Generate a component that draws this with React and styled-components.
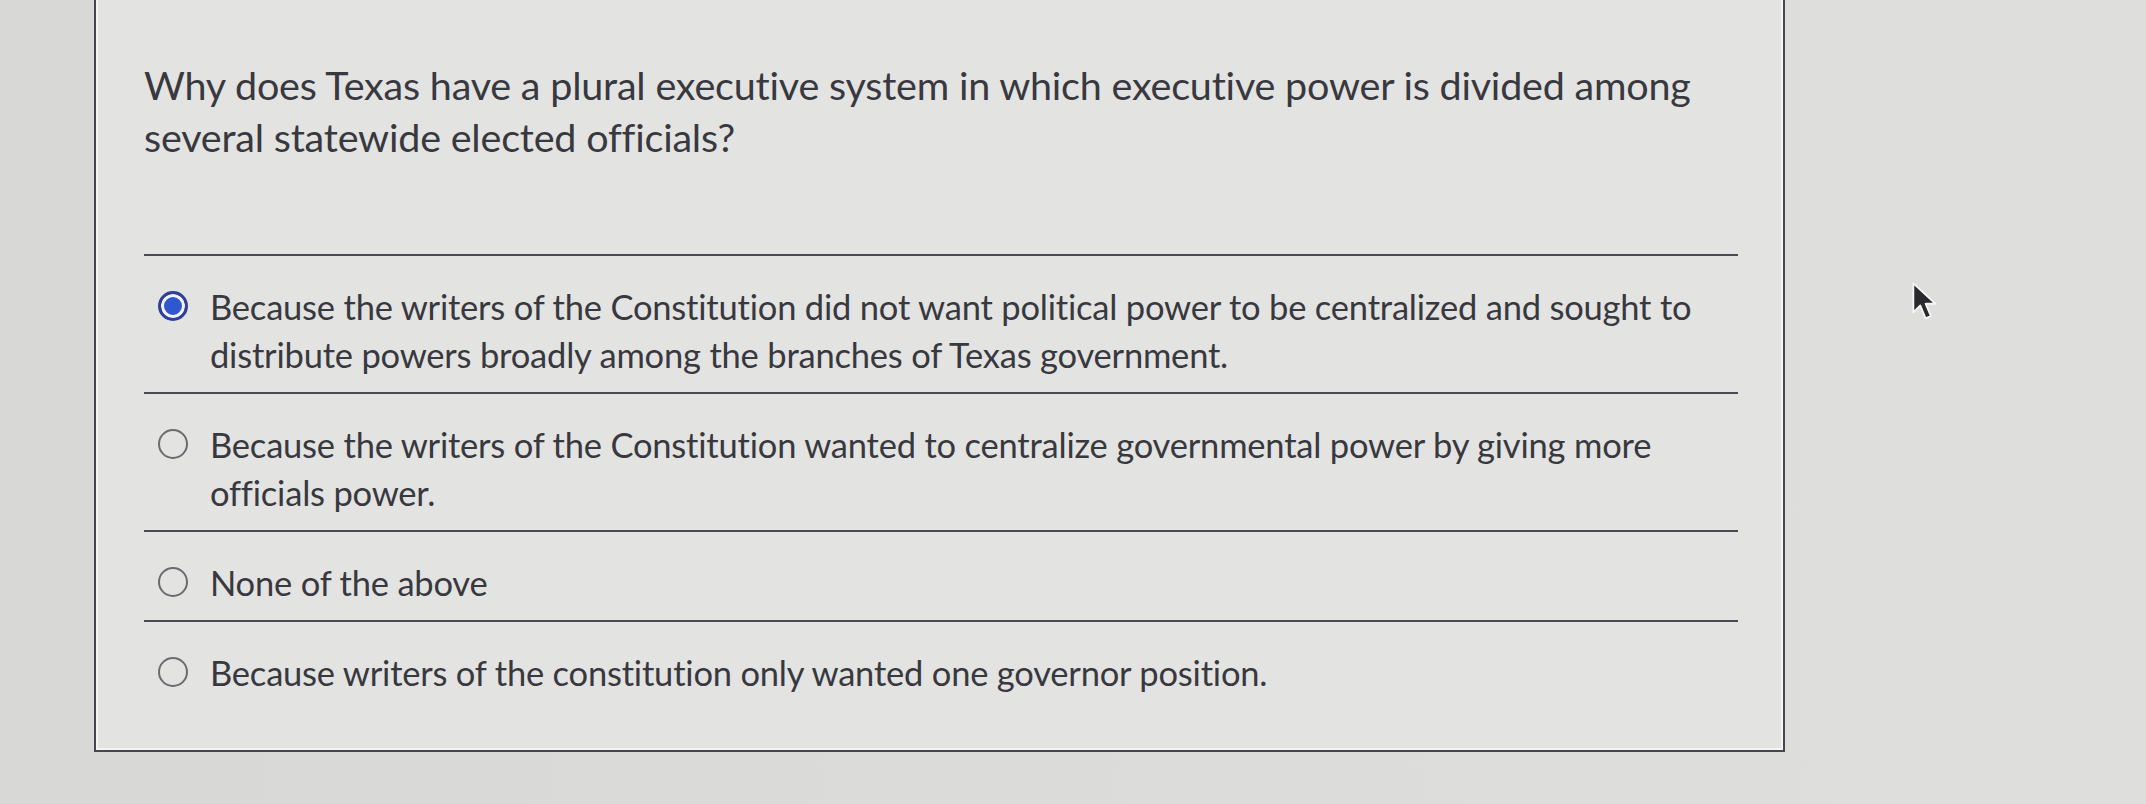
import React from 'react';
import styled, { createGlobalStyle } from 'styled-components';

const GlobalStyle = createGlobalStyle`
  html, body {
    margin: 0;
    padding: 0;
    background: #dadad8;
    overflow: hidden;
  }
  body {
    font-family: Lato, "Open Sans", "Liberation Sans", sans-serif;
  }
`;

const Page = styled.div`
  position: relative;
  width: 2146px;
  height: 804px;
  background: linear-gradient(90deg, #d8d8d6 0%, #dcdcda 60%, #dededc 100%);
`;

const Card = styled.div`
  box-sizing: border-box;
  margin-left: 94px;
  width: 1691px;
  padding: 59px 45px 40px 48px;
  background: #e3e3e1;
  border: 2px solid #46464f;
  border-top: none;
  box-shadow: inset 2px 0 0 #f4f4f2, inset -2px 0 0 #f4f4f2, inset 0 -2px 0 #f4f4f2;
`;

const Question = styled.p`
  margin: 0;
  width: 1600px;
  font-size: 39.5px;
  line-height: 52px;
  letter-spacing: -0.2px;
  color: #38383f;
`;

const AnswerList = styled.div`
  margin-top: 91px;
  display: flex;
  flex-direction: column;
`;

const Answer = styled.label`
  display: flex;
  align-items: flex-start;
  gap: 22px;
  padding: 27px 0 13px 14px;
  border-top: 2px solid #4a4a53;
`;

const Radio = styled.span`
  flex: none;
  box-sizing: border-box;
  width: 30px;
  height: 30px;
  margin-top: 8px;
  border-radius: 50%;
  border: ${p => (p.$checked ? '3px solid #2f3f9a' : '2px solid #6b6b70')};
  background: ${p => (p.$checked ? '#2f57d0' : 'transparent')};
  box-shadow: ${p => (p.$checked ? 'inset 0 0 0 3px #f3f3f6' : 'none')};
`;

const AnswerText = styled.span`
  flex: 1;
  max-width: 1530px;
  font-size: 34.5px;
  line-height: 48px;
  letter-spacing: -0.2px;
  color: #38383f;
`;

const Cursor = styled.svg`
  position: absolute;
  left: 1911px;
  top: 281px;
  width: 28px;
  height: 42px;
`;

const answers = [
  {
    text: 'Because the writers of the Constitution did not want political power to be centralized and sought to distribute powers broadly among the branches of Texas government.',
    checked: true,
  },
  {
    text: 'Because the writers of the Constitution wanted to centralize governmental power by giving more officials power.',
    checked: false,
  },
  { text: 'None of the above', checked: false },
  {
    text: 'Because writers of the constitution only wanted one governor position.',
    checked: false,
  },
];

export default function App() {
  return (
    <Page>
      <GlobalStyle />
      <Card>
        <Question>
          Why does Texas have a plural executive system in which executive power is divided among several statewide elected officials?
        </Question>
        <AnswerList>
          {answers.map((a, i) => (
            <Answer key={i}>
              <Radio $checked={a.checked} />
              <AnswerText>{a.text}</AnswerText>
            </Answer>
          ))}
        </AnswerList>
      </Card>
      <Cursor viewBox="0 0 24 36">
        <path
          d="M2 2 L2 27 L8 21 L12.5 32 L17 30 L12.5 19.5 L21 19.5 Z"
          fill="#2a2a2e"
          stroke="#f6f6f6"
          strokeWidth="1.6"
          strokeLinejoin="round"
        />
      </Cursor>
    </Page>
  );
}
